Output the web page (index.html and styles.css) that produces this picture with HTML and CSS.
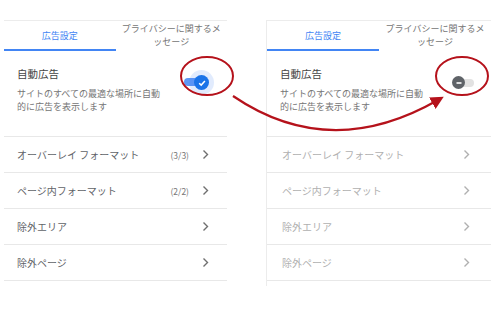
FILE: index.html
```html
<html>
<head>
    <meta charset="utf-8">
    <title>自動広告</title>
    <link rel="stylesheet" href="styles.css">
</head>
<body>
    <div class="wrap">
        <div class="panel">
            <div class="tabs">
                <div class="tab active">広告設定</div>
                <div class="tab">プライバシーに関するメッセージ</div>
            </div>
            <div class="auto">
                <div class="auto-text">
                    <div class="auto-title">自動広告</div>
                    <div class="auto-desc">サイトのすべての最適な場所に自動的に広告を表示します</div>
                </div>
                <div class="toggle on">
                    <span class="track"></span>
                    <span class="knob">
                        <svg width="10" height="10" viewBox="0 0 10 10"><path d="M2.2 5.2 L4.2 7.1 L7.9 3.1" fill="none" stroke="#fff" stroke-width="1.5"/></svg>
                    </span>
                </div>
            </div>
            <div class="row"><span class="label">オーバーレイ フォーマット</span><span class="count">(3/3)</span><svg class="chev" width="7" height="11" viewBox="0 0 7 11"><path d="M1.5 1.5 L5.5 5.5 L1.5 9.5" fill="none" stroke-width="1.4"/></svg></div>
            <div class="row"><span class="label">ページ内フォーマット</span><span class="count">(2/2)</span><svg class="chev" width="7" height="11" viewBox="0 0 7 11"><path d="M1.5 1.5 L5.5 5.5 L1.5 9.5" fill="none" stroke-width="1.4"/></svg></div>
            <div class="row"><span class="label">除外エリア</span><svg class="chev" width="7" height="11" viewBox="0 0 7 11"><path d="M1.5 1.5 L5.5 5.5 L1.5 9.5" fill="none" stroke-width="1.4"/></svg></div>
            <div class="row"><span class="label">除外ページ</span><svg class="chev" width="7" height="11" viewBox="0 0 7 11"><path d="M1.5 1.5 L5.5 5.5 L1.5 9.5" fill="none" stroke-width="1.4"/></svg></div>
        </div>

        <div class="panel off">
            <div class="tabs">
                <div class="tab active">広告設定</div>
                <div class="tab">プライバシーに関するメッセージ</div>
            </div>
            <div class="auto">
                <div class="auto-text">
                    <div class="auto-title">自動広告</div>
                    <div class="auto-desc">サイトのすべての最適な場所に自動的に広告を表示します</div>
                </div>
                <div class="toggle">
                    <span class="track"></span>
                    <span class="knob">
                        <svg width="10" height="10" viewBox="0 0 10 10"><path d="M2.5 5 H7.5" stroke="#fff" stroke-width="1.6"/></svg>
                    </span>
                </div>
            </div>
            <div class="row"><span class="label">オーバーレイ フォーマット</span><svg class="chev" width="7" height="11" viewBox="0 0 7 11"><path d="M1.5 1.5 L5.5 5.5 L1.5 9.5" fill="none" stroke-width="1.4"/></svg></div>
            <div class="row"><span class="label">ページ内フォーマット</span><svg class="chev" width="7" height="11" viewBox="0 0 7 11"><path d="M1.5 1.5 L5.5 5.5 L1.5 9.5" fill="none" stroke-width="1.4"/></svg></div>
            <div class="row"><span class="label">除外エリア</span><svg class="chev" width="7" height="11" viewBox="0 0 7 11"><path d="M1.5 1.5 L5.5 5.5 L1.5 9.5" fill="none" stroke-width="1.4"/></svg></div>
            <div class="row"><span class="label">除外ページ</span><svg class="chev" width="7" height="11" viewBox="0 0 7 11"><path d="M1.5 1.5 L5.5 5.5 L1.5 9.5" fill="none" stroke-width="1.4"/></svg></div>
        </div>
    </div>

    <!-- 赤い注釈 -->
    <svg class="marks" width="500" height="313" viewBox="0 0 500 313">
        <defs>
            <marker id="head" markerWidth="6" markerHeight="6" refX="3" refY="3" orient="auto" markerUnits="strokeWidth">
                <path d="M0 0 L6 3 L0 6 Z" fill="#b5121b"/>
            </marker>
        </defs>
        <ellipse cx="207" cy="76" rx="26" ry="19" fill="none" stroke="#b5121b" stroke-width="2"/>
        <ellipse cx="462" cy="76" rx="26" ry="19" fill="none" stroke="#b5121b" stroke-width="2"/>
        <path d="M233 96 Q330 162 438 100" fill="none" stroke="#b5121b" stroke-width="2.2" marker-end="url(#head)"/>
    </svg>
</body>
</html>
```

FILE: styles.css
```css
* {
    margin: 0;
    padding: 0;
    box-sizing: border-box;
}
body {
    background: #fff;
    font-family: "Noto Sans CJK JP", "Noto Sans", sans-serif;
    color: #5f6368;
    position: relative;
    width: 500px;
    height: 313px;
    overflow: hidden;
}
.wrap {
    display: flex;
    gap: 39px;
    padding: 20px 0 0 4px;
}
.panel {
    width: 223px;
    border-top: 1px solid #ececec;
}
.panel.off {
    width: 225px;
    border-left: 1px solid #ececec;
    height: 266px;
}
.tabs {
    display: flex;
    height: 30px;
}
.tab {
    flex: 1;
    display: flex;
    align-items: center;
    justify-content: center;
    text-align: center;
    font-size: 9px;
    line-height: 13px;
    color: #757575;
    padding: 0 6px;
    margin-top: -2px;
}
.tab.active {
    color: #4285f4;
    border-bottom: 2px solid #4285f4;
    margin-top: 0;
    padding-top: 1px;
}
.auto {
    display: flex;
    justify-content: space-between;
    height: 86px;
    padding: 15px 0 0 13px;
    border-bottom: 1px solid #e8e8e8;
}
.auto-title {
    font-size: 10.5px;
    color: #444;
    line-height: 16px;
    margin-bottom: 5px;
}
.auto-desc {
    font-size: 9px;
    line-height: 13px;
    width: 148px;
    color: #757575;
}
.toggle {
    position: relative;
    width: 40px;
    height: 24px;
    margin: 5px 8px 0 0;
}
.track {
    position: absolute;
    left: 5px;
    top: 7px;
    width: 18px;
    height: 8px;
    border-radius: 4px;
    background: #5e97f6;
}
.knob {
    position: absolute;
    left: 15px;
    top: 4px;
    width: 15px;
    height: 15px;
    border-radius: 50%;
    background: #1a73e8;
    display: flex;
    align-items: center;
    justify-content: center;
    box-shadow: 0 0 0 5px rgba(66, 133, 244, 0.16);
}
.off .toggle {
    margin-right: 10px;
}
.off .track {
    left: 18px;
    top: 8px;
    width: 15px;
    background: #e2e2e2;
}
.off .knob {
    left: 11px;
    top: 5px;
    width: 13px;
    height: 13px;
    background: #5f6368;
    box-shadow: none;
}
.row {
    display: flex;
    align-items: center;
    height: 36px;
    padding: 0 18px 0 13px;
    border-bottom: 1px solid #e8e8e8;
    font-size: 10px;
}
.label {
    flex: 1;
    color: #5f6368;
}
.count {
    font-size: 8.5px;
    margin-right: 13px;
    color: #757575;
}
.chev {
    stroke: #6f6f6f;
}
.off .row {
    padding-left: 15px;
    padding-right: 21px;
}
.off .label {
    color: #b0b0b0;
}
.off .chev {
    stroke: #b0b0b0;
}
.marks {
    position: absolute;
    left: 0;
    top: 0;
    pointer-events: none;
}
```
